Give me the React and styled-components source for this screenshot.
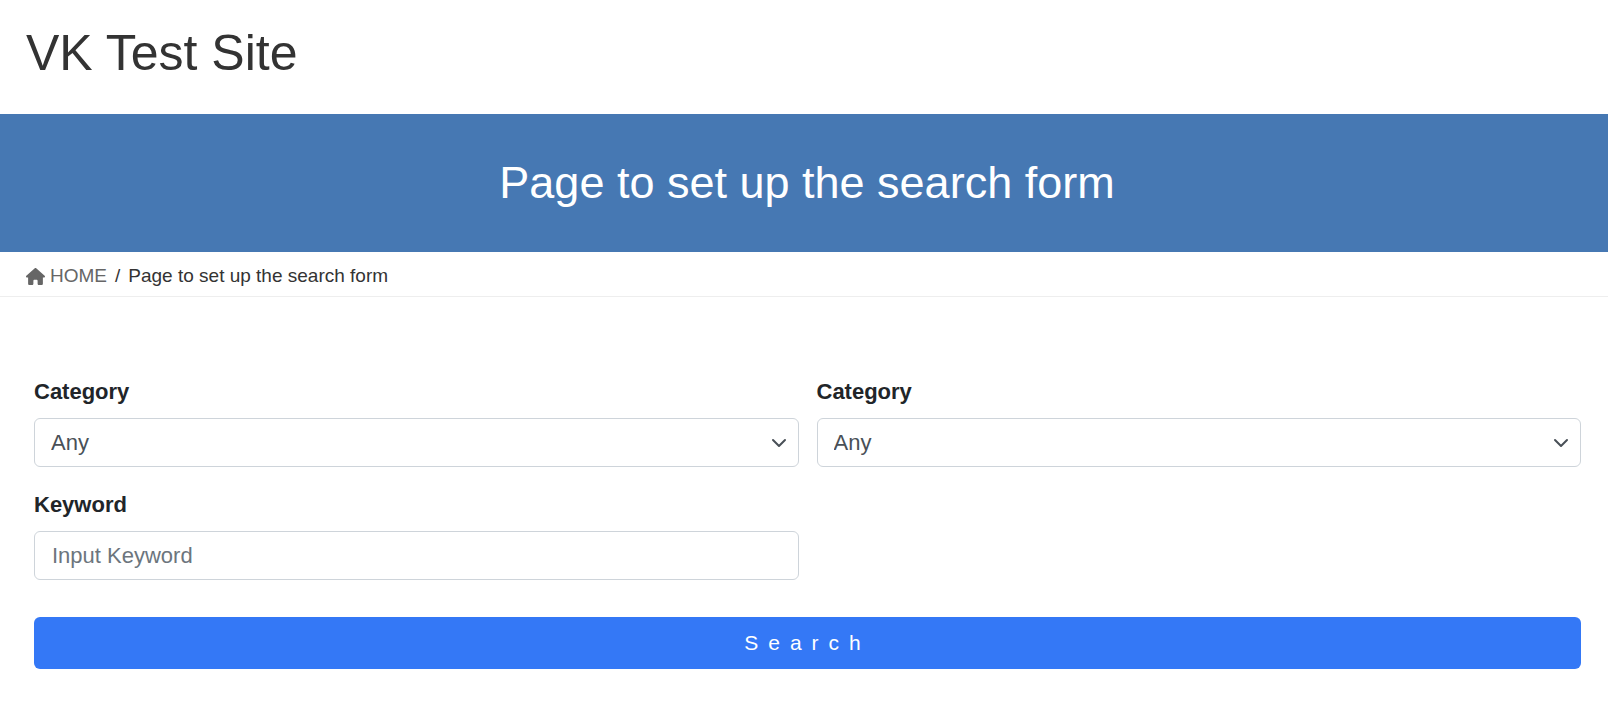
import styled, { createGlobalStyle } from "styled-components";
import { FaHouse } from "react-icons/fa6";

const arrow =
  "data:image/svg+xml,%3csvg xmlns='http://www.w3.org/2000/svg' viewBox='0 0 16 16'%3e%3cpath fill='none' stroke='%23495057' stroke-linecap='round' stroke-linejoin='round' stroke-width='2' d='M2 5l6 6 6-6'/%3e%3c/svg%3e";

const App = () => {
  return (
    <>
      <GlobalStyle />
      <Header>
        <SiteName href="#">VK Test Site</SiteName>
      </Header>
      <PageHeader>
        <PageTitle>Page to set up the search form</PageTitle>
      </PageHeader>
      <Breadcrumb aria-label="Breadcrumb">
        <CrumbList>
          <li>
            <HomeLink href="#">
              <FaHouse size={19} />
              HOME
            </HomeLink>
          </li>
          <li aria-hidden="true">/</li>
          <li>Page to set up the search form</li>
        </CrumbList>
      </Breadcrumb>
      <main>
        <SearchForm onSubmit={(e) => e.preventDefault()}>
          <Field>
            <Label htmlFor="category1">Category</Label>
            <Select id="category1">
              <option>Any</option>
            </Select>
          </Field>
          <Field>
            <Label htmlFor="category2">Category</Label>
            <Select id="category2">
              <option>Any</option>
            </Select>
          </Field>
          <Field>
            <Label htmlFor="keyword">Keyword</Label>
            <Input id="keyword" type="text" placeholder="Input Keyword" />
          </Field>
          <Button type="submit">Search</Button>
        </SearchForm>
      </main>
    </>
  );
};
export default App;

const GlobalStyle = createGlobalStyle`
  * {
    box-sizing: border-box;
  }
  body {
    margin: 0;
    background: #fff;
    color: #333;
    font-family: "Liberation Sans", "Noto Sans CJK JP", sans-serif;
  }
  input, select, button {
    font-family: inherit;
  }
`;

const Header = styled.header`
  padding: 17px 26px 25px;
`;
const SiteName = styled.a`
  display: block;
  font-size: 50px;
  line-height: 72px;
  color: #333;
  text-decoration: none;
`;
const PageHeader = styled.div`
  padding: 36px 22px 36px 28px;
  background: #4678b3;
  text-align: center;
`;
const PageTitle = styled.h1`
  margin: 0;
  font-size: 45px;
  line-height: 66px;
  font-weight: 400;
  color: #fff;
`;
const Breadcrumb = styled.nav`
  padding: 10px 26px 6px;
  border-bottom: 1px solid #eee;
`;
const CrumbList = styled.ol`
  display: flex;
  gap: 8px;
  margin: 0;
  padding: 0;
  list-style: none;
  font-size: 19px;
  line-height: 28px;
`;
const HomeLink = styled.a`
  display: flex;
  align-items: center;
  gap: 5px;
  color: #666;
  text-decoration: none;
`;
const SearchForm = styled.form`
  display: grid;
  grid-template-columns: 1fr 1fr;
  gap: 20px 18px;
  padding: 77px 27px 50px 34px;
`;
const Field = styled.div`
  display: flex;
  flex-direction: column;
  gap: 8px;
`;
const Label = styled.label`
  font-size: 22px;
  line-height: 36px;
  font-weight: 700;
  color: #212529;
`;
const Select = styled.select`
  width: 100%;
  height: 49px;
  padding: 0 40px 0 16px;
  appearance: none;
  border: 1px solid #ced4da;
  border-radius: 6px;
  background: #fff url("${arrow}") no-repeat right 11px center / 16px 16px;
  font-size: 22px;
  color: #495057;
`;
const Input = styled.input`
  width: 100%;
  height: 49px;
  padding: 0 17px;
  border: 1px solid #ced4da;
  border-radius: 6px;
  font-size: 22px;
  color: #495057;
  &::placeholder {
    color: #6c757d;
    opacity: 1;
  }
`;
const Button = styled.button`
  grid-column: 1 / -1;
  height: 52px;
  margin-top: 17px;
  border: 0;
  border-radius: 6px;
  background: #3478f6;
  color: #fff;
  font-size: 21px;
  letter-spacing: 10px;
`;
